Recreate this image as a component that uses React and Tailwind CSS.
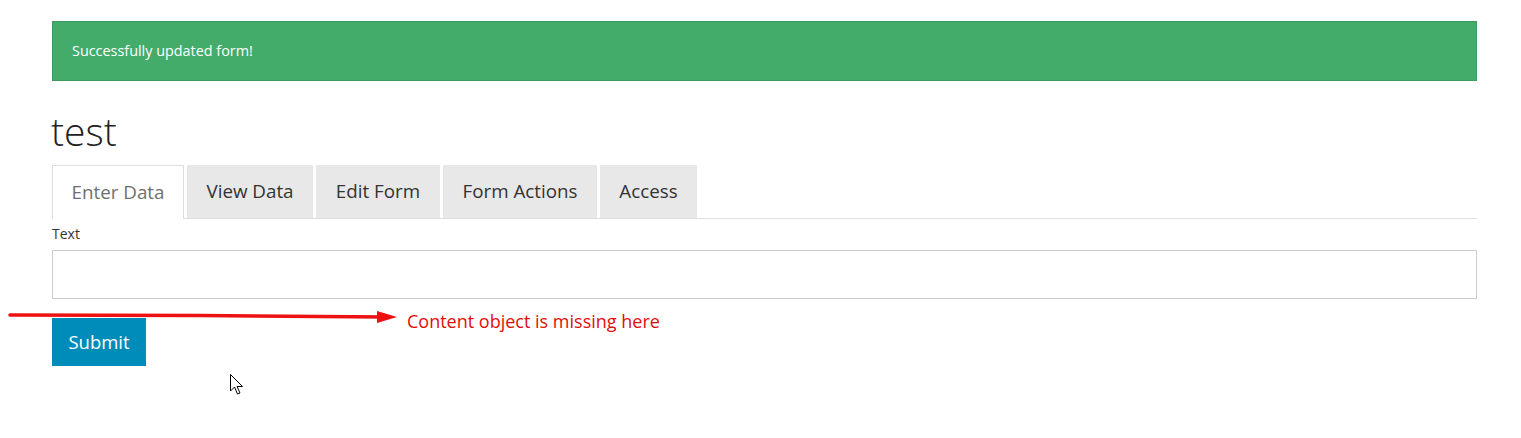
import React from "react";

export default function App() {
  const tabs = [
    ["View Data", "w-[126px]"],
    ["Edit Form", "w-[124px]"],
    ["Form Actions", "w-[154px]"],
    ["Access", "w-[97px]"],
  ];
  return (
    <div className="relative w-[1521px] h-[438px] bg-white overflow-hidden" style={{ fontFamily: '"Open Sans", "Noto Sans", sans-serif' }}>
      <div className="ml-[52px] w-[1425px] pt-[21px]">
        <div className="h-[60px] bg-[#43ac6a] border border-[#3c9a5f] flex items-center pl-[19px] text-[14.4px] text-white">
          Successfully updated form!
        </div>
        <h1 className="mt-[26px] text-[39px] leading-[48px] font-light text-[#222] -ml-[1px]">test</h1>
        <div className="mt-[10px] flex border-b border-[#dddddd] h-[54px]">
          <div className="w-[132px] h-[54px] flex items-center justify-center bg-white border border-b-0 border-[#dddddd] text-[18.8px] text-[#6f6f6f] -mb-[1px]">
            Enter Data
          </div>
          {tabs.map(([t, w]) => (
            <div key={t} className={"ml-[3px] h-[53px] flex items-center justify-center bg-[#e8e8e8] text-[18.8px] text-[#333] " + w}>
              {t}
            </div>
          ))}
        </div>
        <div className="mt-[6px] text-[14px] leading-[18px] text-[#333]">Text</div>
        <div className="mt-[7px] h-[49px] border border-[#cccccc] bg-white"></div>
        <button className="mt-[19px] h-[48px] w-[94px] bg-[#008cba] text-white text-[18.5px] flex items-center justify-center">
          Submit
        </button>
      </div>

      <svg className="absolute left-0 top-0" width="420" height="340" viewBox="0 0 420 340">
        <path d="M10 315 L200 315.5 L385 317" stroke="#ee1111" strokeWidth="3.5" fill="none" strokeLinecap="round" />
        <polygon points="377,311 397,317 377,323" fill="#ee1111" />
      </svg>
      <div className="absolute left-[407px] top-[308px] text-[18px] text-[#e00d0d]" style={{ fontFamily: '"Open Sans", sans-serif' }}>
        Content object is missing here
      </div>

      <svg className="absolute left-[230px] top-[374px]" width="16" height="25" viewBox="0 0 16 25">
        <path d="M0.5 0.5 L0.5 17 L4.5 13 L7.5 20 L10 19 L7 12.5 L12.5 12.5 Z" fill="white" stroke="black" strokeWidth="1" strokeLinejoin="miter" />
      </svg>
    </div>
  );
}
